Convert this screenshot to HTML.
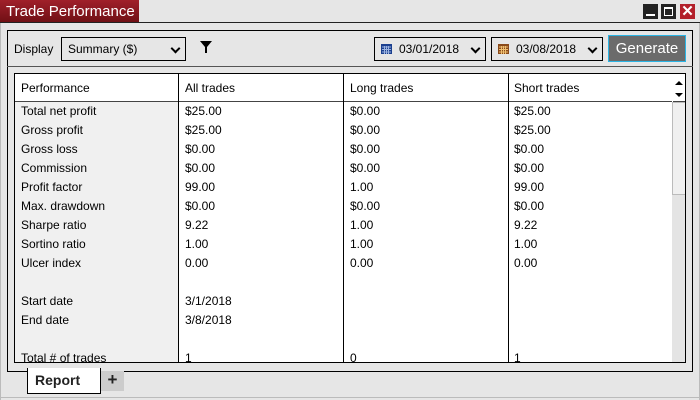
<!DOCTYPE html>
<html><head><style>
*{box-sizing:border-box;margin:0;padding:0}
body{width:700px;height:400px;background:#e6e6e6;font-family:"Liberation Sans",sans-serif;font-size:12px;color:#000;position:relative;overflow:hidden}
.a{position:absolute}
.title{left:0;top:0;width:139px;height:23px;background:linear-gradient(#a0202a,#6e0f14);color:#fff;font-size:15px;line-height:23px;padding-left:6px;white-space:nowrap;overflow:hidden}
.tline{left:0;top:22px;width:700px;height:1px;background:#222}
.wb{top:4px;width:15px;height:15px;background:#222}
.panel{left:7px;top:30px;width:686px;height:342px;border:1px solid #000}
.sel{border:1px solid #000;height:24px;line-height:22px;font-size:12px;white-space:nowrap}
.chev{position:absolute;right:6px;top:7px;width:7px;height:7px;border-right:2px solid #000;border-bottom:2px solid #000;transform:rotate(45deg)}
.tbl{left:14px;top:73px;width:672px;height:290px;border:1px solid #000;background:#fff;overflow:hidden}
.c0{left:0;top:0;width:164px;height:290px;background:#f0f0f0}
.vl{top:0;width:1px;height:290px;background:#000}
.hd{top:0;height:28px;line-height:28px}
.r{line-height:19px;white-space:nowrap}
</style></head><body>
<div class="a title">Trade Performance</div>
<div class="a tline"></div>
<div class="a" style="left:0;top:23px;width:1px;height:377px;background:#bbb"></div>
<div class="a" style="left:699px;top:23px;width:1px;height:377px;background:#bbb"></div>
<div class="a" style="left:0;top:397px;width:700px;height:1px;background:#bbb"></div>
<div class="a wb" style="left:643px"><div class="a" style="left:3px;top:10px;width:9px;height:2px;background:#fff"></div></div>
<div class="a wb" style="left:661px"><div class="a" style="left:3px;top:3px;width:9px;height:9px;border:1px solid #fff;border-top-width:2px"></div></div>
<div class="a wb" style="left:680px;background:#b3202a;color:#fff;font-size:15px;line-height:15px;text-align:center;font-weight:bold">✕</div>
<div class="a panel"></div>
<div class="a" style="left:7px;top:66px;width:686px;height:1px;background:#555"></div>
<div class="a" style="left:14px;top:42px;font-size:12px">Display</div>
<div class="a sel" style="left:61px;top:37px;width:125px;padding-left:6px">Summary ($)<div class="chev"></div></div>
<svg class="a" style="left:199px;top:40px" width="14" height="14"><path d="M1 1H13L8 7V13H6V7Z" fill="#000"/></svg>
<div class="a sel" style="left:374px;top:37px;width:112px;padding-left:24px">03/01/2018<div class="chev"></div>
<svg class="a" style="left:6px;top:6px" width="11" height="10"><rect x="0" y="0" width="11" height="10" fill="#1b3f8f"/><path d="M1 3H10M1 5.5H10M1 8H10M3.5 2V10M5.5 2V10M7.5 2V10" stroke="#9bb3e0" stroke-width="1"/></svg></div>
<div class="a sel" style="left:491px;top:37px;width:112px;padding-left:24px">03/08/2018<div class="chev"></div>
<svg class="a" style="left:6px;top:6px" width="11" height="10"><rect x="0" y="0" width="11" height="10" fill="#8a4a1a"/><path d="M1 3H10M1 5.5H10M1 8H10M3.5 2V10M5.5 2V10M7.5 2V10" stroke="#f0c070" stroke-width="1"/></svg></div>
<div class="a" style="left:608px;top:35px;width:78px;height:27px;background:#6b6b6b;border:1px solid #2ab4e4;color:#fff;font-size:15px;line-height:25px;text-align:center">Generate</div>
<div class="a tbl">
<div class="a c0"></div>
<div class="a" style="left:0;top:0;width:672px;height:28px;background:#fff"></div>
<div class="a" style="left:0;top:27px;width:672px;height:1px;background:#444"></div>
<div class="a vl" style="left:163px"></div>
<div class="a vl" style="left:328px"></div>
<div class="a vl" style="left:493px"></div>
<div class="a vl" style="left:657px;height:28px;background:#fff"></div>
<div class="a" style="left:657px;top:28px;width:14px;height:262px;background:#e4e4e4"></div>
<div class="a" style="left:657px;top:28px;width:14px;height:93px;background:#f0f0f0;border:1px solid #bbb"></div>
<svg class="a" style="left:659px;top:5px" width="10" height="20"><path d="M1 6L5 2L9 6Z M1 14L5 18L9 14Z" fill="#000"/></svg>
<div class="a hd" style="left:6px">Performance</div>
<div class="a hd" style="left:170px">All trades</div>
<div class="a hd" style="left:335px">Long trades</div>
<div class="a hd" style="left:499px">Short trades</div>
<div class="a r" style="left:6px;top:28px">Total net profit<br>Gross profit<br>Gross loss<br>Commission<br>Profit factor<br>Max. drawdown<br>Sharpe ratio<br>Sortino ratio<br>Ulcer index<br>&nbsp;<br>Start date<br>End date<br>&nbsp;<br>Total # of trades</div>
<div class="a r" style="left:170px;top:28px">$25.00<br>$25.00<br>$0.00<br>$0.00<br>99.00<br>$0.00<br>9.22<br>1.00<br>0.00<br>&nbsp;<br>3/1/2018<br>3/8/2018<br>&nbsp;<br>1</div>
<div class="a r" style="left:335px;top:28px">$0.00<br>$0.00<br>$0.00<br>$0.00<br>1.00<br>$0.00<br>1.00<br>1.00<br>0.00<br>&nbsp;<br>&nbsp;<br>&nbsp;<br>&nbsp;<br>0</div>
<div class="a r" style="left:499px;top:28px">$25.00<br>$25.00<br>$0.00<br>$0.00<br>99.00<br>$0.00<br>9.22<br>1.00<br>0.00<br>&nbsp;<br>&nbsp;<br>&nbsp;<br>&nbsp;<br>1</div>
</div>
<div class="a" style="left:27px;top:368px;width:74px;height:26px;background:#fff;border:1px solid #000;border-top:none;font-size:14px;font-weight:bold;line-height:24px;padding-left:7px;color:#222">Report</div>
<div class="a" style="left:101px;top:371px;width:23px;height:20px;background:#ccc;text-align:center;font-size:17px;font-weight:bold;line-height:18px;color:#222">+</div>
</body></html>
